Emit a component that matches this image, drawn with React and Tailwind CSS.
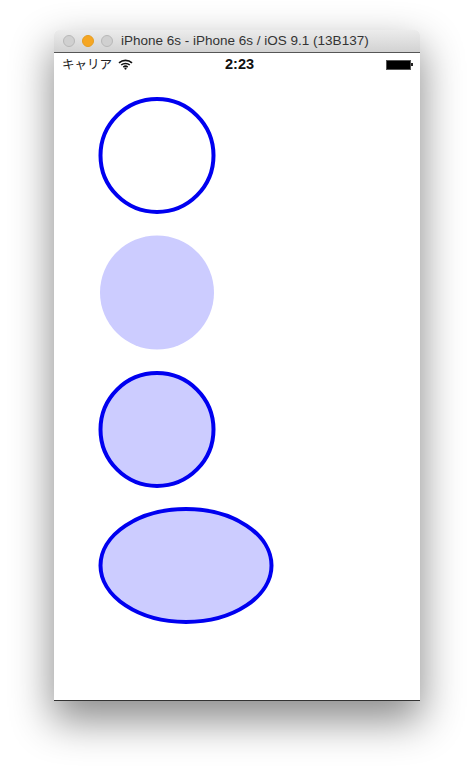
function Wifi() {
  return (
    <svg width="15" height="11" viewBox="0 0 15 11" fill="none" stroke="#111" strokeWidth="1.6">
      <path d="M1 3.8C4.6 .6 10.4 .6 14 3.8" />
      <path d="M3.2 6C5.6 3.9 9.4 3.9 11.8 6" />
      <path d="M5.3 8.1C6.5 7.1 8.5 7.1 9.7 8.1" />
      <circle cx="7.5" cy="9.6" r="1.1" fill="#111" stroke="none" />
    </svg>
  )
}

function TrafficLight({ color, border }) {
  return <span className={`w-3 h-3 rounded-full border ${color} ${border}`} />
}

// width is the svg box, the ellipse sits in its middle; inset keeps the outer edge in place
function Shape({ width = 118, fill = 'none', stroke = '#0000f0', inset = 2.5, className = '' }) {
  return (
    <svg width={width} height="119" viewBox={`0 0 ${width} 119`} className={`block ${className}`}>
      <ellipse cx={width / 2} cy="59.5" rx={width / 2 - inset} ry={59 - inset} fill={fill} stroke={stroke} strokeWidth="4" />
    </svg>
  )
}

function App() {
  return (
    <div className="w-[474px] h-[779px] bg-white overflow-hidden pt-[30px] pl-[54px] font-['Liberation_Sans','Noto_Sans_CJK_JP',sans-serif]">
      <div className="w-[366px] h-[671px] bg-white flex flex-col rounded-t-[5px] border-b border-b-[#333] shadow-[0_18px_40px_2px_rgba(0,0,0,0.45)]">
        {/* Title bar */}
        <div className="h-[23px] shrink-0 flex items-center px-[9px] rounded-t-[5px] bg-gradient-to-b from-[#ececec] to-[#d2d2d2] border-b border-b-[#555]">
          <div className="flex items-center gap-[7px]">
            <TrafficLight color="bg-[#d0d0d0]" border="border-[#b8b8b8]" />
            <TrafficLight color="bg-[#f5a623]" border="border-[#e69d20]" />
            <TrafficLight color="bg-[#d0d0d0]" border="border-[#b8b8b8]" />
          </div>
          <span className="ml-[8px] text-[13.5px] text-[#333] whitespace-nowrap">iPhone 6s - iPhone 6s / iOS 9.1 (13B137)</span>
        </div>

        {/* Status bar */}
        <div className="h-[23px] shrink-0 relative flex items-center justify-between pl-2 pr-[7px]">
          <div className="flex items-center gap-[6px]">
            <span className="text-[12.5px] text-[#222] translate-y-px">キャリア</span>
            <Wifi />
          </div>
          <span className="absolute left-[171px] text-[14.5px] font-bold text-[#111]">2:23</span>
          <div className="flex items-center">
            <span className="w-[25px] h-[10px] bg-black border border-[#555]" />
            <span className="w-[2px] h-[3px] bg-[#222]" />
          </div>
        </div>

        {/* Shapes */}
        <div className="flex flex-col items-start pl-[44px] pt-[20px]">
          <Shape />
          <Shape fill="#ccccff" stroke="none" inset={2} className="mt-[18px]" />
          <Shape fill="#ccccff" className="mt-[18px]" />
          <Shape width={176} fill="#ccccff" className="mt-[17px]" />
        </div>
      </div>
    </div>
  )
}

export default App
